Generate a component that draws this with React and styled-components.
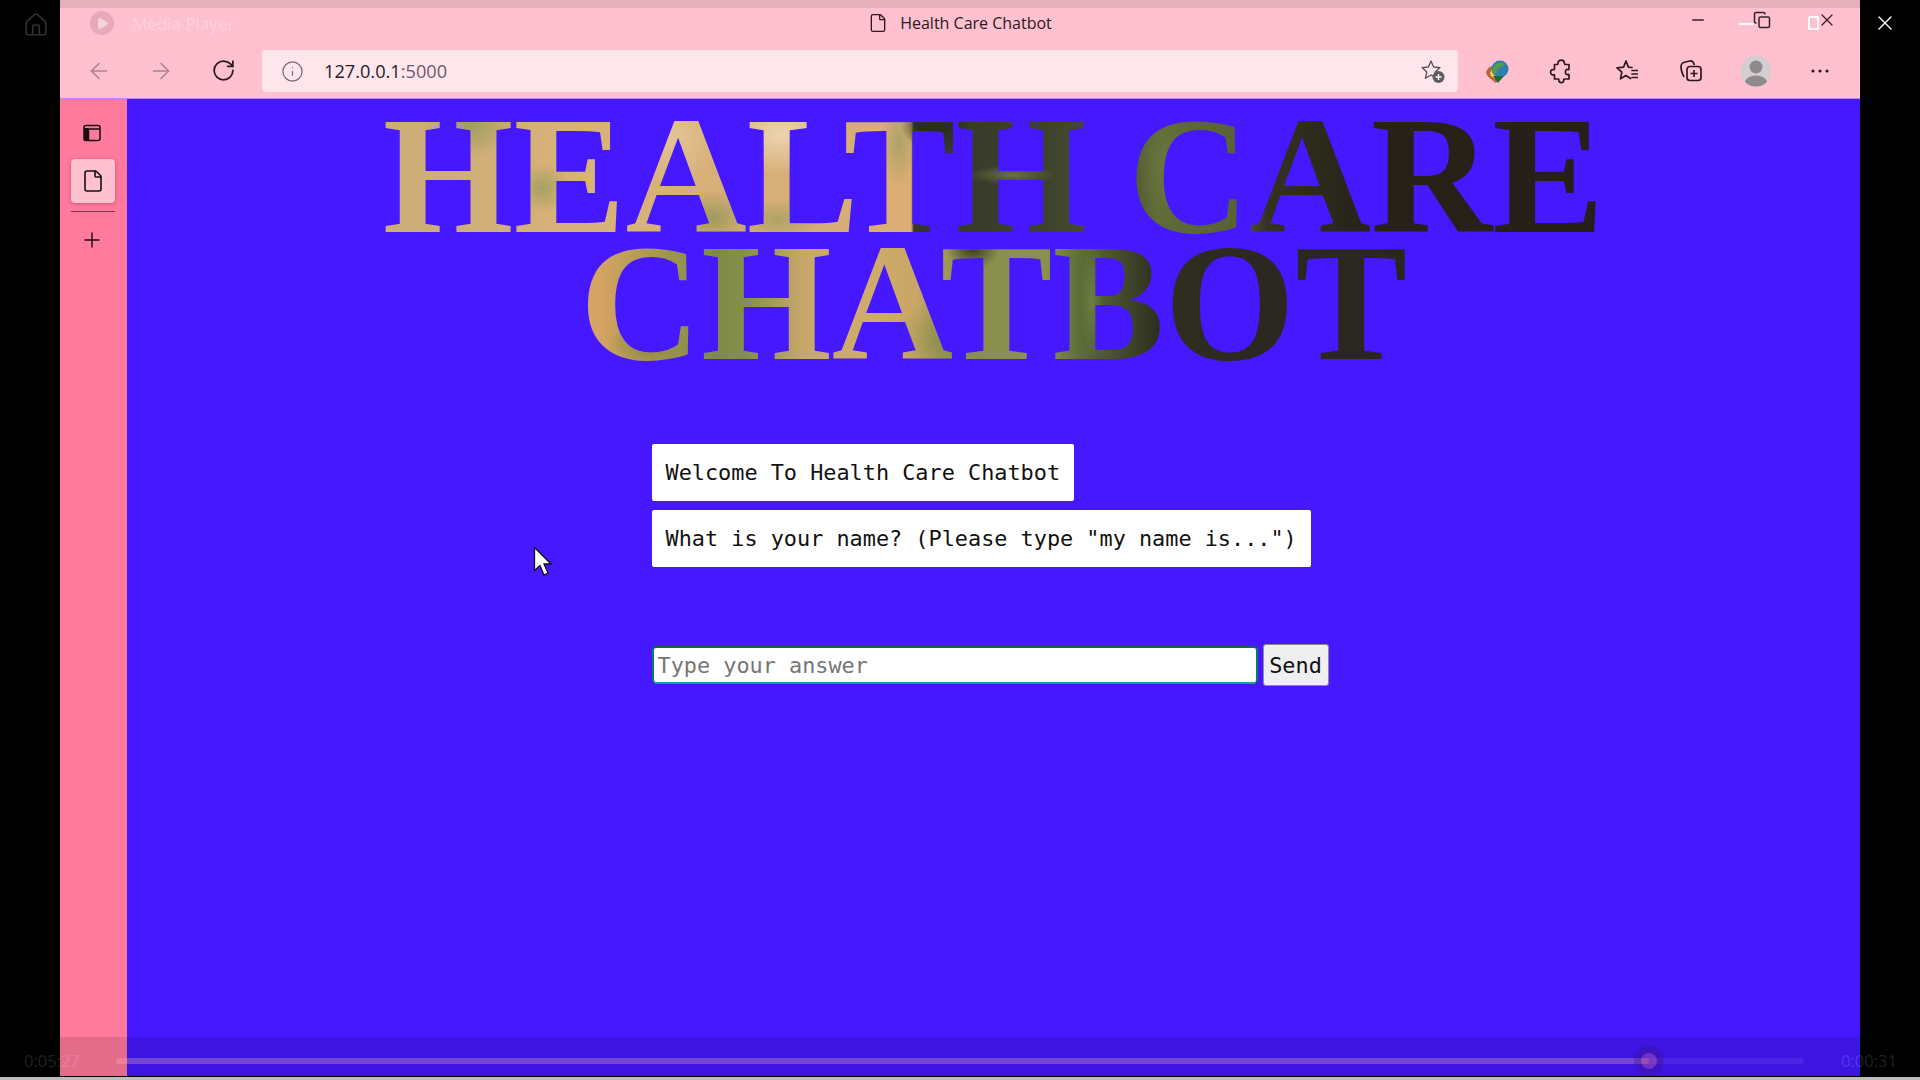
import React from "react";
import styled, { createGlobalStyle, css } from "styled-components";
import {
  ArrowLeft,
  ArrowRight,
  RotateCw,
  Info,
  Plus,
  File,
  Home,
  X,
  Minus,
  Copy,
  Play,
} from "lucide-react";

const GlobalStyle = createGlobalStyle`
  html, body {
    margin: 0;
    height: 100%;
    background: #000;
    overflow: hidden;
  }
`;

const Screen = styled.div`
  position: relative;
  width: 1920px;
  height: 1080px;
  display: flex;
  flex-direction: column;
  background: #000;
`;

const Desktop = styled.div`
  flex: 1;
  display: flex;
  min-height: 0;
`;

const Gutter = styled.div`
  width: 60px;
  flex-shrink: 0;
  box-sizing: border-box;
  background: #000;
  display: flex;
  justify-content: center;
  padding: ${(props) => props.$top}px ${(props) => props.$right}px 0 ${(props) => props.$left}px;
  color: ${(props) => props.$color};
`;

const BottomStrip = styled.div`
  height: 3px;
  margin-top: 1px;
  background: #bdbdbd;
`;

const Browser = styled.div`
  flex: 1;
  display: flex;
  flex-direction: column;
  min-width: 0;
  background: #ffc0cf;
`;

const TopEdge = styled.div`
  height: 8px;
  background: #e6b0bc;
`;

const TitleBar = styled.div`
  position: relative;
  height: 42px;
  box-sizing: border-box;
  padding-top: 3px;
  display: grid;
  grid-template-columns: 1fr auto 1fr;
  align-items: start;
  font-family: "Open Sans", sans-serif;
`;

const GhostApp = styled.div`
  display: flex;
  align-items: center;
  gap: 18px;
  padding-left: 30px;
  height: 24px;
  font-size: 17px;
  color: rgba(255, 255, 255, 0.3);
`;

const GhostBadge = styled.div`
  width: 24px;
  height: 24px;
  border-radius: 50%;
  background: #e8a9bb;
  display: flex;
  align-items: center;
  justify-content: center;
  color: #f6d3dc;
`;

const PageTitle = styled.div`
  display: flex;
  align-items: center;
  gap: 12px;
  height: 24px;
  font-size: 16px;
  color: #2b1a20;
`;

const WindowControls = styled.div`
  display: flex;
  justify-content: flex-end;
  align-items: center;
  gap: 46px;
  padding-right: 23px;
  height: 24px;
  margin-top: -3px;
  color: #3a2029;
`;

const GhostMark = styled.div`
  position: absolute;
  top: ${(props) => props.$top}px;
  right: ${(props) => props.$right}px;
  width: ${(props) => props.$w}px;
  height: ${(props) => props.$h}px;
  box-sizing: border-box;
  border: ${(props) => (props.$h > 2 ? "2px solid #fff" : "0")};
  background: ${(props) => (props.$h > 2 ? "transparent" : "#fff")};
  border-radius: 2px;
`;

const Toolbar = styled.div`
  height: 42px;
  padding-bottom: 6px;
  display: flex;
  align-items: center;
  border-bottom: 1px solid #b58af0;
`;

const NavButton = styled.div`
  width: 62px;
  display: flex;
  justify-content: center;
  color: ${(props) => props.$color || "#2c1a20"};
`;

const NavGroup = styled.div`
  display: flex;
  margin-left: 8px;
  margin-right: 8px;
`;

const AddressBar = styled.div`
  width: 1196px;
  height: 42px;
  display: flex;
  align-items: center;
  border-radius: 4px;
  background: #ffe6ec;
  padding: 0 12px 0 19px;
  box-sizing: border-box;
  font-family: "Open Sans", sans-serif;
  font-size: 18.2px;
`;

const UrlHost = styled.span`
  color: #2a1a22;
  margin-left: 20px;
`;

const UrlPort = styled.span`
  color: #6d5a62;
`;

const AddressEnd = styled.div`
  margin-left: auto;
  display: flex;
`;

const ToolbarIcons = styled.div`
  flex: 1;
  display: flex;
  align-items: center;
  padding-left: 26px;
  padding-right: 30px;
  justify-content: space-between;
`;

const Viewport = styled.div`
  flex: 1;
  display: flex;
  min-height: 0;
`;

const TabRail = styled.div`
  width: 67px;
  flex-shrink: 0;
  background: #ff7a9c;
  display: flex;
  flex-direction: column;
  align-items: center;
  color: #1a0d12;
  padding-top: 24px;
  padding-right: 1px;
  box-sizing: border-box;
`;

const RailIcon = styled.div`
  height: 20px;
  display: flex;
  align-items: center;
  margin-right: 2px;
`;

const ActiveTab = styled.div`
  width: 44px;
  height: 44px;
  margin-top: 16px;
  border-radius: 4px;
  background: #ffc0cf;
  box-shadow: 0 1px 4px rgba(120, 20, 50, 0.35);
  display: flex;
  align-items: center;
  justify-content: center;
`;

const RailDivider = styled.div`
  width: 44px;
  height: 1px;
  margin: 8px 0 16px;
  background: #7c3a4d;
`;

const RailAdd = styled.div`
  display: flex;
  margin-right: 3px;
`;

const Page = styled.main`
  flex: 1;
  min-width: 0;
  background: #4518ff;
  display: flex;
  flex-direction: column;
  align-items: center;
`;

const Heading = styled.h1`
  margin: 13px 0 0;
  width: 100%;
  text-align: center;
  font-family: "Liberation Serif", "Times New Roman", serif;
  font-weight: 700;
  font-size: 168px;
  line-height: 127px;
`;

// the photo behind the title is approximated per line, x/y are relative to the line box
const clippedLine = css`
  display: block;
  color: transparent;
  background-repeat: no-repeat;
  -webkit-background-clip: text;
  background-clip: text;
`;

const HeadingTop = styled.span`
  ${clippedLine}
  background-image:
    radial-gradient(ellipse 34px 24px at 808px 14px, #2a2e1c 35%, transparent),
    radial-gradient(ellipse 18px 44px at 772px 30px, rgba(140, 155, 95, 0.6), transparent),
    radial-gradient(ellipse 46px 30px at 343px 14px, rgba(130, 148, 85, 0.65), transparent),
    radial-gradient(ellipse 30px 24px at 415px 76px, rgba(130, 148, 80, 0.55), transparent),
    radial-gradient(ellipse 42px 28px at 585px 106px, rgba(130, 142, 78, 0.65), transparent),
    radial-gradient(ellipse 42px 22px at 650px 108px, rgba(150, 155, 90, 0.6), transparent),
    radial-gradient(ellipse 70px 42px at 655px 22px, rgba(240, 218, 186, 0.85), transparent),
    radial-gradient(ellipse 52px 52px at 545px 24px, rgba(232, 206, 165, 0.65), transparent),
    radial-gradient(ellipse 44px 10px at 885px 63px, rgba(118, 128, 66, 0.8), transparent),
    radial-gradient(ellipse 30px 60px at 1040px 55px, rgba(118, 132, 68, 0.5), transparent),
    linear-gradient(90deg, #c8ac74 0, #cfae78 330px, #d9b27a 460px, #d6ad76 700px, #dcae74 784px, #35382a 787px, #3c3f2a 900px, #4a5030 990px, #5f6a38 1030px, #586236 1110px, #343223 1140px, #262218 1240px, #231f18 1733px);
`;

const HeadingBottom = styled.span`
  ${clippedLine}
  background-image:
    radial-gradient(ellipse 26px 20px at 846px 10px, rgba(45, 48, 32, 0.85), transparent),
    radial-gradient(ellipse 40px 22px at 520px 105px, rgba(130, 130, 66, 0.8), transparent),
    radial-gradient(ellipse 44px 40px at 815px 100px, rgba(120, 135, 70, 0.6), transparent),
    radial-gradient(ellipse 12px 60px at 965px 60px, rgba(122, 142, 76, 0.6), transparent),
    linear-gradient(90deg, #d6a25e 0, #d8a464 470px, #a6984f 530px, #7d8a48 590px, #85904c 620px, #c6a86a 675px, #d0ac6c 740px, #c8a665 790px, #8a8f4c 835px, #8a904e 920px, #5f7038 950px, #4a5230 985px, #2f2f20 1030px, #2a2820 1120px, #262218 1733px);
`;

const Chat = styled.section`
  width: 684px;
  margin-top: 78px;
  display: flex;
  flex-direction: column;
  align-items: flex-start;
  font-family: "DejaVu Sans Mono", "Liberation Mono", monospace;
  font-size: 21.85px;
`;

const Bubble = styled.div`
  background: #fff;
  color: #111;
  border-radius: 2px;
  height: 57px;
  line-height: 58px;
  padding: 0 14px;
  margin-bottom: 9px;
  white-space: pre;
`;

const Composer = styled.form`
  margin-top: 68px;
  display: flex;
  align-items: center;
  gap: 7px;
`;

const AnswerInput = styled.input`
  width: 598px;
  height: 34px;
  box-sizing: content-box;
  margin: 0 0 0 2px;
  padding: 0 0 0 4px;
  border: 0;
  border-radius: 2px;
  outline: 0;
  box-shadow: 0 -2px 0 #0a6a50, 0 2px 0 #17a08c, -2px 0 0 #0a7a68, 2px 0 0 #0a7a68;
  background: #fff;
  font: inherit;
  color: #111;

  &::placeholder {
    color: #767676;
    opacity: 1;
  }
`;

const SendButton = styled.button`
  width: 66px;
  height: 42px;
  padding: 0;
  border: 1px solid #8d8d8d;
  border-radius: 3px;
  background: #efefef;
  color: #111;
  font: inherit;
`;

const Pointer = styled.svg`
  position: absolute;
  left: 533px;
  top: 546px;
`;

const PlayerBar = styled.div`
  position: absolute;
  left: 0;
  right: 60px;
  bottom: 4px;
  height: 39px;
  background: rgba(0, 0, 0, 0.11);
  font-family: "Open Sans", sans-serif;
  font-size: 16.5px;
  color: rgba(255, 255, 255, 0.14);
`;

const PlayerTime = styled.span`
  position: absolute;
  top: 12px;
  left: ${(props) => props.$left}px;
`;

const Track = styled.div`
  position: absolute;
  left: 116px;
  top: 21px;
  width: 1688px;
  height: 6px;
  border-radius: 3px;
  background: rgba(255, 255, 255, 0.07);
`;

const TrackFill = styled.div`
  height: 100%;
  border-radius: 3px;
  background: rgba(255, 170, 150, 0.24);
`;

const Thumb = styled.div`
  position: absolute;
  top: -5px;
  margin-left: -8px;
  width: 16px;
  height: 16px;
  border-radius: 50%;
  background: rgba(190, 90, 150, 0.42);
  box-shadow: 0 0 0 7px rgba(60, 20, 120, 0.3);
`;

const PanelIcon = () => (
  <svg width="20" height="20" viewBox="0 0 20 20" fill="none" stroke="currentColor" strokeWidth="1.5">
    <rect x="2" y="2.5" width="16" height="15" rx="2" />
    <path d="M2 6h16" />
    <path d="M3 6h3.5v11H3z" fill="currentColor" />
  </svg>
);

const StarPlus = () => (
  <svg width="26" height="26" viewBox="0 0 26 26" fill="none">
    <path d="M11 3l2.600 6 6.400.6-4.800 4.300 1.400 6.400-5.600-3.300-5.600 3.300 1.400-6.400L2 9.600 8.400 9z" stroke="#5a4a50" strokeWidth="1.3" strokeLinejoin="round" />
    <circle cx="18.500" cy="19" r="6" fill="#5f5a5c" />
    <path d="M18.500 16v6M15.500 19h6" stroke="#fff" strokeWidth="1.4" />
  </svg>
);

const DownloadGlobe = () => (
  <svg width="26" height="26" viewBox="0 0 26 26">
    <path d="M2 14c2-5 6-7 10-6l3 14-3 3C8 21 3 20 2 14z" fill="#c0603a" />
    <path d="M6 15c1-3 3-5 6-5l2 9-2 2c-3-1-6-3-6-6z" fill="#e9d24c" />
    <circle cx="16" cy="11" r="8.500" fill="#2f7fb0" />
    <path d="M9 9c3-4 8-6 12-3-2 3-5 2-7 5s-1 5-4 5c-2-2-2-5-1-7z" fill="#4e9e4a" />
    <path d="M9 18h11l-6 7z" fill="#1e6a36" />
  </svg>
);

const PuzzleIcon = () => (
  <svg width="26" height="26" viewBox="0 0 26 26" fill="none" stroke="#2c1a20" strokeWidth="1.7" strokeLinejoin="round">
    <path d="M10 5.500c0-4.500 6.500-4.500 6.500 0 0 .7.4 1 1 1H21v4.300c0 .7-.5 1-1 .8-3.500-1.200-3.500 6 0 4.800.5-.2 1 .1 1 .8V21h-4.500c-.7 0-1 .4-.8 1 1 3.500-5.800 3.500-4.800 0 .2-.6-.1-1-.8-1H6.500v-3.500c0-.7-.5-1-1-.8-3.800 1.200-3.800-6.200 0-5 .5.200 1-.1 1-.8V6.500H9c.7 0 1-.3 1-1z" />
  </svg>
);

const FavoritesIcon = () => (
  <svg width="26" height="26" viewBox="-3 0 26 26" fill="none" stroke="#2c1a20" strokeWidth="1.7" strokeLinejoin="round" strokeLinecap="round">
    <path d="M17 9.500l-3.600-.4L11 3 8.600 9.100 2 9.800l4.800 4.400-1.300 6.600L11 17.500l4.500 3" />
    <path d="M17 12.500h5.500M17 16h5.500M17 19.500h5.500" />
  </svg>
);

const CollectionsIcon = () => (
  <svg width="26" height="26" viewBox="-2 0 26 26" fill="none" stroke="#2c1a20" strokeWidth="1.7" strokeLinejoin="round">
    <rect x="9" y="8.500" width="14" height="14" rx="3" />
    <path d="M16 12v7M12.500 15.500h7" />
    <path d="M6 19c-1.500-3-3-7-3-10 0-3 1.500-4.500 4-5l5-1c2-.3 3.500.8 4.300 4" />
  </svg>
);

const ProfileIcon = () => (
  <svg width="32" height="32" viewBox="0 0 32 32">
    <defs>
      <clipPath id="avatar">
        <circle cx="16" cy="16" r="15.500" />
      </clipPath>
    </defs>
    <circle cx="16" cy="16" r="15.500" fill="#d6cdd1" />
    <g clipPath="url(#avatar)" fill="#8f8a8c">
      <circle cx="16" cy="12" r="6.500" />
      <path d="M4 32c0-8 5-11.500 12-11.500S28 24 28 32z" />
    </g>
  </svg>
);

const MoreIcon = () => (
  <svg width="20" height="6" viewBox="0 0 20 6" fill="#2c1a20">
    <circle cx="3" cy="3" r="1.600" />
    <circle cx="10" cy="3" r="1.600" />
    <circle cx="17" cy="3" r="1.600" />
  </svg>
);

const App = () => {
  return (
    <Screen>
      <GlobalStyle />
      <Desktop>
        <Gutter $top={12} $left={11} $right={0} $color="#2f2f2f">
          <Home size={26} strokeWidth={1.6} />
        </Gutter>
        <Browser>
          <TopEdge />
          <TitleBar>
            <GhostApp>
              <GhostBadge>
                <Play size={13} fill="currentColor" />
              </GhostBadge>
              Media Player
            </GhostApp>
            <PageTitle>
              <File size={20} strokeWidth={1.6} />
              Health Care Chatbot
            </PageTitle>
            <WindowControls>
              <Minus size={18} />
              <Copy size={18} />
              <X size={20} strokeWidth={1.5} />
            </WindowControls>
            <GhostMark $top={15} $right={106} $w={15} $h={2} />
            <GhostMark $top={8} $right={41} $w={11} $h={14} />
          </TitleBar>
          <Toolbar>
            <NavGroup>
              <NavButton $color="#a88490">
                <ArrowLeft size={26} strokeWidth={1.4} />
              </NavButton>
              <NavButton $color="#a88490">
                <ArrowRight size={26} strokeWidth={1.4} />
              </NavButton>
              <NavButton>
                <RotateCw size={25} strokeWidth={1.7} />
              </NavButton>
            </NavGroup>
            <AddressBar>
              <Info size={23} strokeWidth={1.3} color="#7b6a70" />
              <UrlHost>127.0.0.1</UrlHost>
              <UrlPort>:5000</UrlPort>
              <AddressEnd>
                <StarPlus />
              </AddressEnd>
            </AddressBar>
            <ToolbarIcons>
              <DownloadGlobe />
              <PuzzleIcon />
              <FavoritesIcon />
              <CollectionsIcon />
              <ProfileIcon />
              <MoreIcon />
            </ToolbarIcons>
          </Toolbar>
          <Viewport>
            <TabRail>
              <RailIcon>
                <PanelIcon />
              </RailIcon>
              <ActiveTab>
                <File size={24} strokeWidth={1.6} />
              </ActiveTab>
              <RailDivider />
              <RailAdd>
                <Plus size={24} strokeWidth={1.4} />
              </RailAdd>
            </TabRail>
            <Page>
              <Heading>
                <HeadingTop>HEALTH CARE</HeadingTop>
                <HeadingBottom>CHATBOT</HeadingBottom>
              </Heading>
              <Chat>
                <Bubble>Welcome To Health Care Chatbot</Bubble>
                <Bubble>What is your name? (Please type "my name is...")</Bubble>
                <Composer>
                  <AnswerInput placeholder="Type your answer" />
                  <SendButton type="button">Send</SendButton>
                </Composer>
              </Chat>
            </Page>
          </Viewport>
        </Browser>
        <Gutter $top={11} $left={0} $right={10} $color="#fff">
          <X size={24} strokeWidth={1.4} />
        </Gutter>
      </Desktop>
      <BottomStrip />
      <Pointer width="19" height="30" viewBox="0 0 19 30">
        <path d="M1.500 1.500v23l5.500-5 4 9.500 4-2-4-9h7z" fill="#fff" stroke="#111" strokeWidth="1.300" />
      </Pointer>
      <PlayerBar>
        <PlayerTime $left={24}>0:05:27</PlayerTime>
        <Track>
          <TrackFill style={{ width: `${(1533 / 1688) * 100}%` }} />
          <Thumb style={{ left: `${(1533 / 1688) * 100}%` }} />
        </Track>
        <PlayerTime $left={1841}>0:00:31</PlayerTime>
      </PlayerBar>
    </Screen>
  );
};

export default App;
